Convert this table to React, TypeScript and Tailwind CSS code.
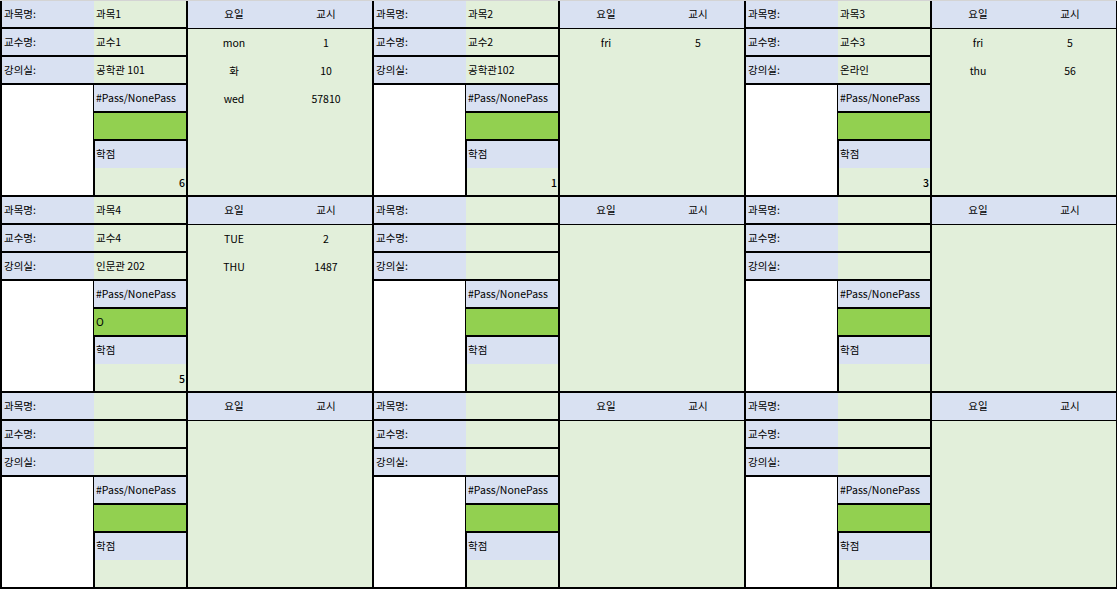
import React from "react";

// ============================================================================
// DATA
// ============================================================================
interface Course {
  name: string;
  professor: string;
  room: string;
  schedule: [string, string][];
  pass: string;
  credit: string;
}

const empty: Course = { name: "", professor: "", room: "", schedule: [], pass: "", credit: "" };

const courses: Course[] = [
  { name: "과목1", professor: "교수1", room: "공학관 101", schedule: [["mon", "1"], ["화", "10"], ["wed", "57810"]], pass: "", credit: "6" },
  { name: "과목2", professor: "교수2", room: "공학관102", schedule: [["fri", "5"]], pass: "", credit: "1" },
  { name: "과목3", professor: "교수3", room: "온라인", schedule: [["fri", "5"], ["thu", "56"]], pass: "", credit: "3" },
  { name: "과목4", professor: "교수4", room: "인문관 202", schedule: [["TUE", "2"], ["THU", "1487"]], pass: "O", credit: "5" },
  empty,
  empty,
  empty,
  empty,
  empty,
];

// ============================================================================
// INFO ROW (label + value)
// ============================================================================
function InfoRow({ label, value }: { label: string; value: string }) {
  return (
    <div className="flex h-[28px] border-b-2 border-black">
      <div className="flex w-[92px] items-center bg-[#D9E1F2] pl-[2px]">{label}</div>
      <div className="flex flex-1 items-center bg-[#E2EFDA] pl-[2px]">{value}</div>
    </div>
  );
}

// ============================================================================
// COURSE CARD
// ============================================================================
function CourseCard({ course }: { course: Course }) {
  return (
    <div className="flex h-[196px] w-[372px] shrink-0">
      {/* left: info */}
      <div className="flex w-[186px] flex-col border-r-2 border-black">
        <InfoRow label="과목명:" value={course.name} />
        <InfoRow label="교수명:" value={course.professor} />
        <InfoRow label="강의실:" value={course.room} />
        <div className="flex flex-1">
          <div className="w-[91px] border-b-2 border-black bg-white" />
          <div className="flex w-[93px] flex-col">
            <div className="flex h-[28px] items-center border-b-2 border-l border-black bg-[#D9E1F2] pl-[2px]">
              #Pass/NonePass
            </div>
            <div className="flex h-[28px] items-center border-b-2 border-l border-black bg-[#92D050] pl-[2px]">
              {course.pass}
            </div>
            <div className="flex flex-1 flex-col border-b-2 border-l-2 border-black">
              <div className="flex h-[27px] items-center bg-[#D9E1F2] pl-[1px]">학점</div>
              <div className="flex flex-1 items-center justify-end bg-[#E2EFDA] pr-[1px] pt-[3px] font-medium">
                {course.credit}
              </div>
            </div>
          </div>
        </div>
      </div>

      {/* right: schedule */}
      <div className="flex w-[186px] flex-col border-r-2 border-black">
        <div className="grid h-[28px] grid-cols-2 items-center border-b border-black bg-[#D9E1F2] text-center">
          <span>요일</span>
          <span>교시</span>
        </div>
        <div className="flex flex-1 flex-col border-b-2 border-black bg-[#E2EFDA]">
          {course.schedule.map(([day, period], i) => (
            <div key={i} className="grid h-[28px] grid-cols-2 items-center text-center">
              <span>{day}</span>
              <span>{period}</span>
            </div>
          ))}
        </div>
      </div>
    </div>
  );
}

export default function App() {
  return (
    <div
      className="h-[591px] w-[1117px] overflow-hidden bg-white text-[10.5px] leading-none text-black"
      style={{ fontFamily: '"Noto Sans CJK KR", "Noto Sans", sans-serif' }}
    >
      <div className="h-px w-[1118px] bg-[#d4d4d4]" />
      <div className="grid w-[1118px] grid-cols-[repeat(3,372px)] border-l-2 border-black">
        {courses.map((c, i) => (
          <CourseCard key={i} course={c} />
        ))}
      </div>
    </div>
  );
}
